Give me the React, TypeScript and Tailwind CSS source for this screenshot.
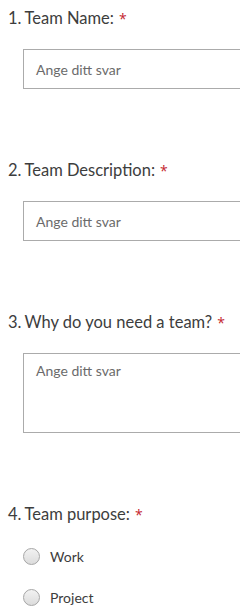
import React from "react";

type Question = {
  no: number;
  title: string;
  kind: "input" | "textarea" | "choice";
  options?: string[];
};

const questions: Question[] = [
  { no: 1, title: "Team Name:", kind: "input" },
  { no: 2, title: "Team Description:", kind: "input" },
  { no: 3, title: "Why do you need a team?", kind: "textarea" },
  { no: 4, title: "Team purpose:", kind: "choice", options: ["Work", "Project"] },
];

function Title({ q }: { q: Question }) {
  return (
    <div className="flex items-baseline text-[16.5px] leading-5 text-[#3d3d3d]">
      <span className="mr-[3px]">{q.no}.</span>
      <span>{q.title}</span>
      <span className="ml-[5px] font-['Open_Sans',sans-serif] text-[14px] text-[#c4262e]">*</span>
    </div>
  );
}

export default function App() {
  return (
    <div
      className="w-[240px] h-[616px] overflow-hidden bg-white pl-2 pt-2"
      style={{ fontFamily: '"Segoe UI", Lato, "Open Sans", sans-serif' }}
    >
      {questions.map((q) => (
        <section key={q.no} className="pb-[71px]">
          <Title q={q} />
          {q.kind === "input" && (
            <div className="ml-[15px] mt-5 flex h-10 w-[400px] items-center border border-[#ababab] px-3 text-[14px] text-[#6b6b6b]">
              Ange ditt svar
            </div>
          )}
          {q.kind === "textarea" && (
            <div className="ml-[15px] mt-5 h-20 w-[400px] border border-[#ababab] px-3 pt-[7px] text-[14px] leading-5 text-[#6b6b6b]">
              Ange ditt svar
            </div>
          )}
          {q.kind === "choice" && (
            <div className="ml-[15px] mt-[23px] flex flex-col gap-6">
              {q.options!.map((o) => (
                <div key={o} className="flex h-[17px] items-center text-[14px] text-[#3d3d3d]">
                  <span className="mr-[10px] h-[17px] w-[17px] rounded-full border border-[#a6a6a6] bg-gradient-to-b from-[#f2f2f2] to-[#dcdcdc]" />
                  {o}
                </div>
              ))}
            </div>
          )}
        </section>
      ))}
    </div>
  );
}
